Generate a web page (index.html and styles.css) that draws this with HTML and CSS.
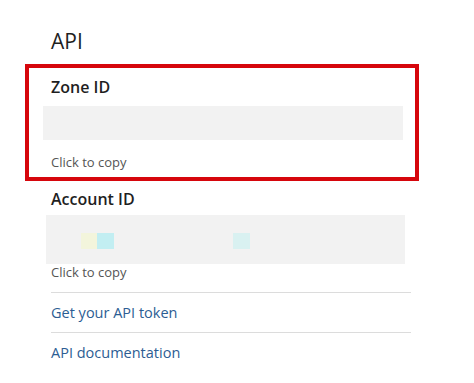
FILE: index.html
```html
<!DOCTYPE html>
<html lang="en">
<head>
  <meta charset="UTF-8" />
  <title>API</title>
  <link rel="stylesheet" href="styles.css">
</head>
<body>
  <div class="panel">
    <h2>API</h2>

    <div class="field highlight">
      <h3>Zone ID</h3>
      <div class="value"></div>
      <p class="hint">Click to copy</p>
    </div>

    <div class="field account">
      <h3>Account ID</h3>
      <div class="value">
        <span class="blot yellow"></span><span class="blot cyan"></span><span class="blot pale"></span>
      </div>
      <p class="hint">Click to copy</p>
    </div>

    <a class="link" href="#">Get your API token</a>
    <a class="link" href="#">API documentation</a>
  </div>
</body>
</html>
```

FILE: styles.css
```css
body {
  margin: 0;
  background: #fff;
  font-family: "Open Sans", "Noto Sans", sans-serif;
  color: #1f1f1f;
}
.panel {
  width: 360px;
  padding: 27px 0 0 51px;
}
h2 {
  margin: 0 0 9px;
  font-size: 21px;
  font-weight: 400;
  line-height: 28px;
}
.field h3 {
  margin: 0;
  font-size: 16px;
  font-weight: 600;
  line-height: 22px;
}
.highlight {
  margin: 0 -8px 0 -26px;
  padding: 8px 12px 6px 22px;
  border: 4px solid #d6060c;
}
.highlight .value {
  margin: 8px 0 0 -8px;
  height: 34px;
}
.highlight .hint {
  margin-top: 13px;
}
.value {
  background: #f2f2f2;
}
.account {
  margin-top: 7px;
}
.account .value {
  position: relative;
  margin: 5px 6px 0 -5px;
  height: 49px;
}
.blot {
  position: absolute;
  top: 18px;
  width: 17px;
  height: 16px;
}
.yellow { left: 35px; background: #f3f5dc; }
.cyan { left: 51px; background: #c2eef2; }
.pale { left: 187px; background: #d9f1f1; }
.hint {
  margin: 14px 0 0;
  font-size: 13px;
  line-height: 18px;
  color: #555;
}
.account .hint {
  margin-top: 0;
  line-height: 16px;
  padding-bottom: 12px;
  border-bottom: 1px solid #dcdcdc;
}
.link {
  display: block;
  padding: 10px 0;
  border-bottom: 1px solid #dcdcdc;
  font-size: 14.5px;
  line-height: 19px;
  color: #2c5d93;
  text-decoration: none;
}
.link:last-child {
  border-bottom: none;
}
```
